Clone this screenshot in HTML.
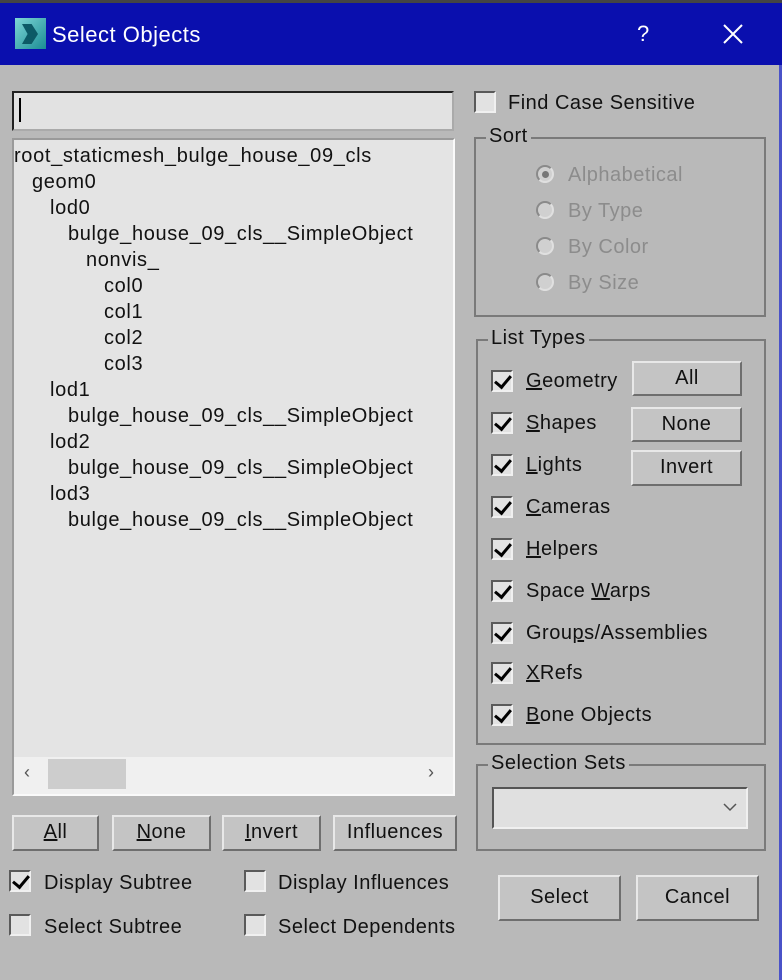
<!DOCTYPE html>
<html><head><style>
*{margin:0;padding:0;box-sizing:border-box}
body{width:782px;height:980px;background:#b9b9b9;font-family:"Liberation Sans","DejaVu Sans",sans-serif;font-size:20px;color:#111;position:relative;overflow:hidden;letter-spacing:0.5px}
.a{position:absolute;white-space:nowrap}
.title{left:0;top:0;width:782px;height:65px;background:#0a0fae;border-top:3px solid #444}
.btn{position:absolute;background:#c4c4c4;border:2px solid;border-color:#e8e8e8 #6e6e6e #6e6e6e #e8e8e8;text-align:center;font-size:20px}
.cb{position:absolute;width:22px;height:22px;background:#e2e2e2;border:2px solid;border-color:#5a5a5a #f0f0f0 #f0f0f0 #5a5a5a}
.cb.c::after{content:"";position:absolute;left:5px;top:0px;width:7px;height:13px;border:solid #000;border-width:0 3px 3px 0;transform:rotate(40deg)}
.grp{position:absolute;border:2px solid #7a7a7a}
.gl{position:absolute;background:#b9b9b9;padding:0 3px;top:-14px;left:10px;font-size:20px}
.rd{position:absolute;width:18px;height:18px;border-radius:50%;background:#d0d0d0;border:2px solid;border-color:#8a8a8a #e0e0e0 #e0e0e0 #8a8a8a}
.gray{color:#8c8c8c}
u{text-decoration:underline}
</style></head><body>
<div class="a title"></div>
<div class="a" style="left:15px;top:18px;width:31px;height:31px;background:linear-gradient(135deg,#7fd6d6,#1a8c94)"></div>
<div class="a" style="left:22px;top:24px;width:16px;height:20px;background:#0c5a66;clip-path:polygon(0 0,60% 0,100% 50%,60% 100%,0 100%,35% 50%)"></div>
<div class="a" style="left:52px;top:22px;color:#fff;font-size:22px">Select Objects</div>
<div class="a" style="left:637px;top:21px;color:#fff;font-size:22px">?</div>
<svg class="a" style="left:722px;top:23px" width="22" height="22"><path d="M2 2L20 20M20 2L2 20" stroke="#fff" stroke-width="2"/></svg>
<div class="a" style="left:779px;top:65px;width:3px;height:915px;background:#4a52c8"></div>

<div class="a" style="left:12px;top:91px;width:442px;height:40px;background:#e2e2e2;border:2px solid;border-color:#222 #aaa #aaa #222"></div>
<div class="a" style="left:19px;top:98px;width:2px;height:24px;background:#000"></div>

<div class="a" style="left:12px;top:138px;width:443px;height:658px;background:#e4e4e4;border:2px solid;border-color:#9a9a9a #fafafa #fafafa #9a9a9a"></div>
<div class="a" style="left:14px;top:143px;line-height:26px;font-size:20px;letter-spacing:0.65px">
<div>root_staticmesh_bulge_house_09_cls</div>
<div style="padding-left:18px">geom0</div>
<div style="padding-left:36px">lod0</div>
<div style="padding-left:54px">bulge_house_09_cls__SimpleObject</div>
<div style="padding-left:72px">nonvis_</div>
<div style="padding-left:90px">col0</div>
<div style="padding-left:90px">col1</div>
<div style="padding-left:90px">col2</div>
<div style="padding-left:90px">col3</div>
<div style="padding-left:36px">lod1</div>
<div style="padding-left:54px">bulge_house_09_cls__SimpleObject</div>
<div style="padding-left:36px">lod2</div>
<div style="padding-left:54px">bulge_house_09_cls__SimpleObject</div>
<div style="padding-left:36px">lod3</div>
<div style="padding-left:54px">bulge_house_09_cls__SimpleObject</div>
</div>
<div class="a" style="left:14px;top:757px;width:439px;height:37px;background:#f0f0f0"></div>
<div class="a" style="left:48px;top:759px;width:78px;height:30px;background:#cdcdcd"></div>
<div class="a" style="left:24px;top:762px;font-size:18px;color:#555">&lsaquo;</div>
<div class="a" style="left:428px;top:762px;font-size:18px;color:#555">&rsaquo;</div>

<div class="cb" style="left:474px;top:91px"></div>
<div class="a" style="left:508px;top:92px">Find Case Sensitive</div>

<div class="grp" style="left:474px;top:137px;width:292px;height:180px"><div class="gl">Sort</div></div>
<div class="rd" style="left:536px;top:165px"></div><div class="a" style="left:542px;top:171px;width:7px;height:7px;border-radius:50%;background:#777"></div>
<div class="a gray" style="left:568px;top:164px">Alphabetical</div>
<div class="rd" style="left:536px;top:201px"></div><div class="a gray" style="left:568px;top:200px">By Type</div>
<div class="rd" style="left:536px;top:237px"></div><div class="a gray" style="left:568px;top:236px">By Color</div>
<div class="rd" style="left:536px;top:273px"></div><div class="a gray" style="left:568px;top:272px">By Size</div>

<div class="grp" style="left:476px;top:339px;width:290px;height:406px"><div class="gl">List Types</div></div>
<div class="cb c" style="left:491px;top:370px"></div><div class="a" style="left:526px;top:370px"><u>G</u>eometry</div>
<div class="cb c" style="left:491px;top:412px"></div><div class="a" style="left:526px;top:412px"><u>S</u>hapes</div>
<div class="cb c" style="left:491px;top:454px"></div><div class="a" style="left:526px;top:454px"><u>L</u>ights</div>
<div class="cb c" style="left:491px;top:496px"></div><div class="a" style="left:526px;top:496px"><u>C</u>ameras</div>
<div class="cb c" style="left:491px;top:538px"></div><div class="a" style="left:526px;top:538px"><u>H</u>elpers</div>
<div class="cb c" style="left:491px;top:580px"></div><div class="a" style="left:526px;top:580px">Space <u>W</u>arps</div>
<div class="cb c" style="left:491px;top:622px"></div><div class="a" style="left:526px;top:622px">Grou<u>p</u>s/Assemblies</div>
<div class="cb c" style="left:491px;top:662px"></div><div class="a" style="left:526px;top:662px"><u>X</u>Refs</div>
<div class="cb c" style="left:491px;top:704px"></div><div class="a" style="left:526px;top:704px"><u>B</u>one Objects</div>
<div class="btn" style="left:632px;top:361px;width:110px;height:35px;line-height:30px">All</div>
<div class="btn" style="left:631px;top:407px;width:111px;height:35px;line-height:30px">None</div>
<div class="btn" style="left:631px;top:450px;width:111px;height:36px;line-height:31px">Invert</div>

<div class="grp" style="left:476px;top:764px;width:290px;height:87px"><div class="gl">Selection Sets</div></div>
<div class="a" style="left:492px;top:787px;width:256px;height:42px;background:#e0e0e0;border:2px solid;border-color:#555 #f0f0f0 #f0f0f0 #555"></div>
<svg class="a" style="left:723px;top:803px" width="14" height="9"><path d="M1 1L7 7L13 1" stroke="#555" fill="none" stroke-width="1.5"/></svg>

<div class="btn" style="left:12px;top:815px;width:87px;height:36px;line-height:31px"><u>A</u>ll</div>
<div class="btn" style="left:112px;top:815px;width:99px;height:36px;line-height:31px"><u>N</u>one</div>
<div class="btn" style="left:222px;top:815px;width:99px;height:36px;line-height:31px"><u>I</u>nvert</div>
<div class="btn" style="left:333px;top:815px;width:124px;height:36px;line-height:31px">Influences</div>

<div class="cb c" style="left:9px;top:870px"></div><div class="a" style="left:44px;top:872px">Display Subtree</div>
<div class="cb" style="left:9px;top:914px"></div><div class="a" style="left:44px;top:916px">Select Subtree</div>
<div class="cb" style="left:244px;top:870px"></div><div class="a" style="left:278px;top:872px">Display Influences</div>
<div class="cb" style="left:244px;top:914px"></div><div class="a" style="left:278px;top:916px">Select Dependents</div>

<div class="btn" style="left:498px;top:875px;width:123px;height:46px;line-height:41px">Select</div>
<div class="btn" style="left:636px;top:875px;width:123px;height:46px;line-height:41px">Cancel</div>
</body></html>
